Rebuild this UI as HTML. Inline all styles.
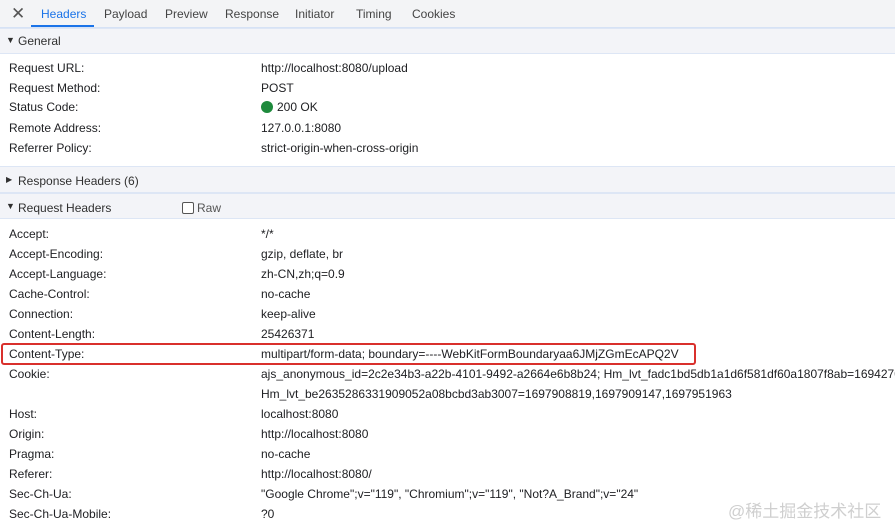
<!DOCTYPE html>
<html><head><meta charset="utf-8"><style>
*{margin:0;padding:0;box-sizing:border-box}
body{width:895px;height:525px;overflow:hidden;background:#fff;font-family:"Liberation Sans",sans-serif;font-size:12px;color:#202124;position:relative}
.tabs{position:absolute;left:0;top:0;width:895px;height:28px;background:#f3f4f6;border-bottom:1px solid #d6e2f5}
.tab{position:absolute;top:7px;color:#444}
.sel{color:#1a73e8}
.uline{position:absolute;left:31px;top:25px;width:63px;height:2px;background:#1a73e8}
.sec{position:absolute;left:0;width:895px;background:#f3f4f8;border-top:1px solid #dde6f5;border-bottom:1px solid #dde6f5;color:#303030}
.r{position:absolute;white-space:nowrap}
.l{left:9px}.v{left:261px}
.box{position:absolute;left:1px;top:343px;width:695px;height:22px;border:2px solid #d9302c;border-radius:3px}
</style></head><body>
<div class="tabs">
<div class="tab" style="left:11px;top:4px;font-size:17px;color:#555">✕</div>
<div class="tab sel" style="left:41px">Headers</div>
<div class="tab" style="left:104px">Payload</div>
<div class="tab" style="left:165px">Preview</div>
<div class="tab" style="left:225px">Response</div>
<div class="tab" style="left:295px">Initiator</div>
<div class="tab" style="left:356px">Timing</div>
<div class="tab" style="left:412px">Cookies</div>
<div class="uline"></div>
</div>
<div class="sec" style="top:28px;height:26px"><span class="r" style="left:6px;top:6px;font-size:9px">▼</span><span class="r" style="left:18px;top:5px">General</span></div>
<div class="r l" style="top:61px">Request URL:</div><div class="r v" style="top:61px">http://localhost:8080/upload</div>
<div class="r l" style="top:81px">Request Method:</div><div class="r v" style="top:81px">POST</div>
<div class="r l" style="top:100px">Status Code:</div><div class="r v" style="top:100px"><span style="display:inline-block;width:12px;height:12px;border-radius:50%;background:#1e8a3c;vertical-align:-2px;margin-right:4px"></span>200 OK</div>
<div class="r l" style="top:121px">Remote Address:</div><div class="r v" style="top:121px">127.0.0.1:8080</div>
<div class="r l" style="top:141px">Referrer Policy:</div><div class="r v" style="top:141px">strict-origin-when-cross-origin</div>
<div class="sec" style="top:166px;height:27px"><span class="r" style="left:6px;top:8px;font-size:8px">▶</span><span class="r" style="left:18px;top:7px">Response Headers (6)</span></div>
<div class="sec" style="top:193px;height:26px"><span class="r" style="left:6px;top:7px;font-size:9px">▼</span><span class="r" style="left:18px;top:7px">Request Headers</span><span class="r" style="left:182px;top:8px;width:12px;height:12px;border:1px solid #555;border-radius:2px;background:#fff"></span><span class="r" style="left:197px;top:7px;color:#555">Raw</span></div>
<div class="r l" style="top:227px">Accept:</div><div class="r v" style="top:227px">*/*</div>
<div class="r l" style="top:247px">Accept-Encoding:</div><div class="r v" style="top:247px">gzip, deflate, br</div>
<div class="r l" style="top:267px">Accept-Language:</div><div class="r v" style="top:267px">zh-CN,zh;q=0.9</div>
<div class="r l" style="top:287px">Cache-Control:</div><div class="r v" style="top:287px">no-cache</div>
<div class="r l" style="top:307px">Connection:</div><div class="r v" style="top:307px">keep-alive</div>
<div class="r l" style="top:327px">Content-Length:</div><div class="r v" style="top:327px">25426371</div>
<div class="r l" style="top:347px">Content-Type:</div><div class="r v" style="top:347px">multipart/form-data; boundary=----WebKitFormBoundaryaa6JMjZGmEcAPQ2V</div>
<div class="box"></div>
<div class="r l" style="top:367px">Cookie:</div><div class="r v" style="top:367px">ajs_anonymous_id=2c2e34b3-a22b-4101-9492-a2664e6b8b24; Hm_lvt_fadc1bd5db1a1d6f581df60a1807f8ab=1694270806</div>
<div class="r v" style="top:387px">Hm_lvt_be2635286331909052a08bcbd3ab3007=1697908819,1697909147,1697951963</div>
<div class="r l" style="top:407px">Host:</div><div class="r v" style="top:407px">localhost:8080</div>
<div class="r l" style="top:427px">Origin:</div><div class="r v" style="top:427px">http://localhost:8080</div>
<div class="r l" style="top:447px">Pragma:</div><div class="r v" style="top:447px">no-cache</div>
<div class="r l" style="top:467px">Referer:</div><div class="r v" style="top:467px">http://localhost:8080/</div>
<div class="r l" style="top:487px">Sec-Ch-Ua:</div><div class="r v" style="top:487px">"Google Chrome";v="119", "Chromium";v="119", "Not?A_Brand";v="24"</div>
<div class="r l" style="top:507px">Sec-Ch-Ua-Mobile:</div><div class="r v" style="top:507px">?0</div>
<div class="r" style="left:728px;top:497px;font-size:17px;color:#cfcfcf;font-family:'Liberation Sans','Noto Sans CJK SC',sans-serif">@稀土掘金技术社区</div>
</body></html>
